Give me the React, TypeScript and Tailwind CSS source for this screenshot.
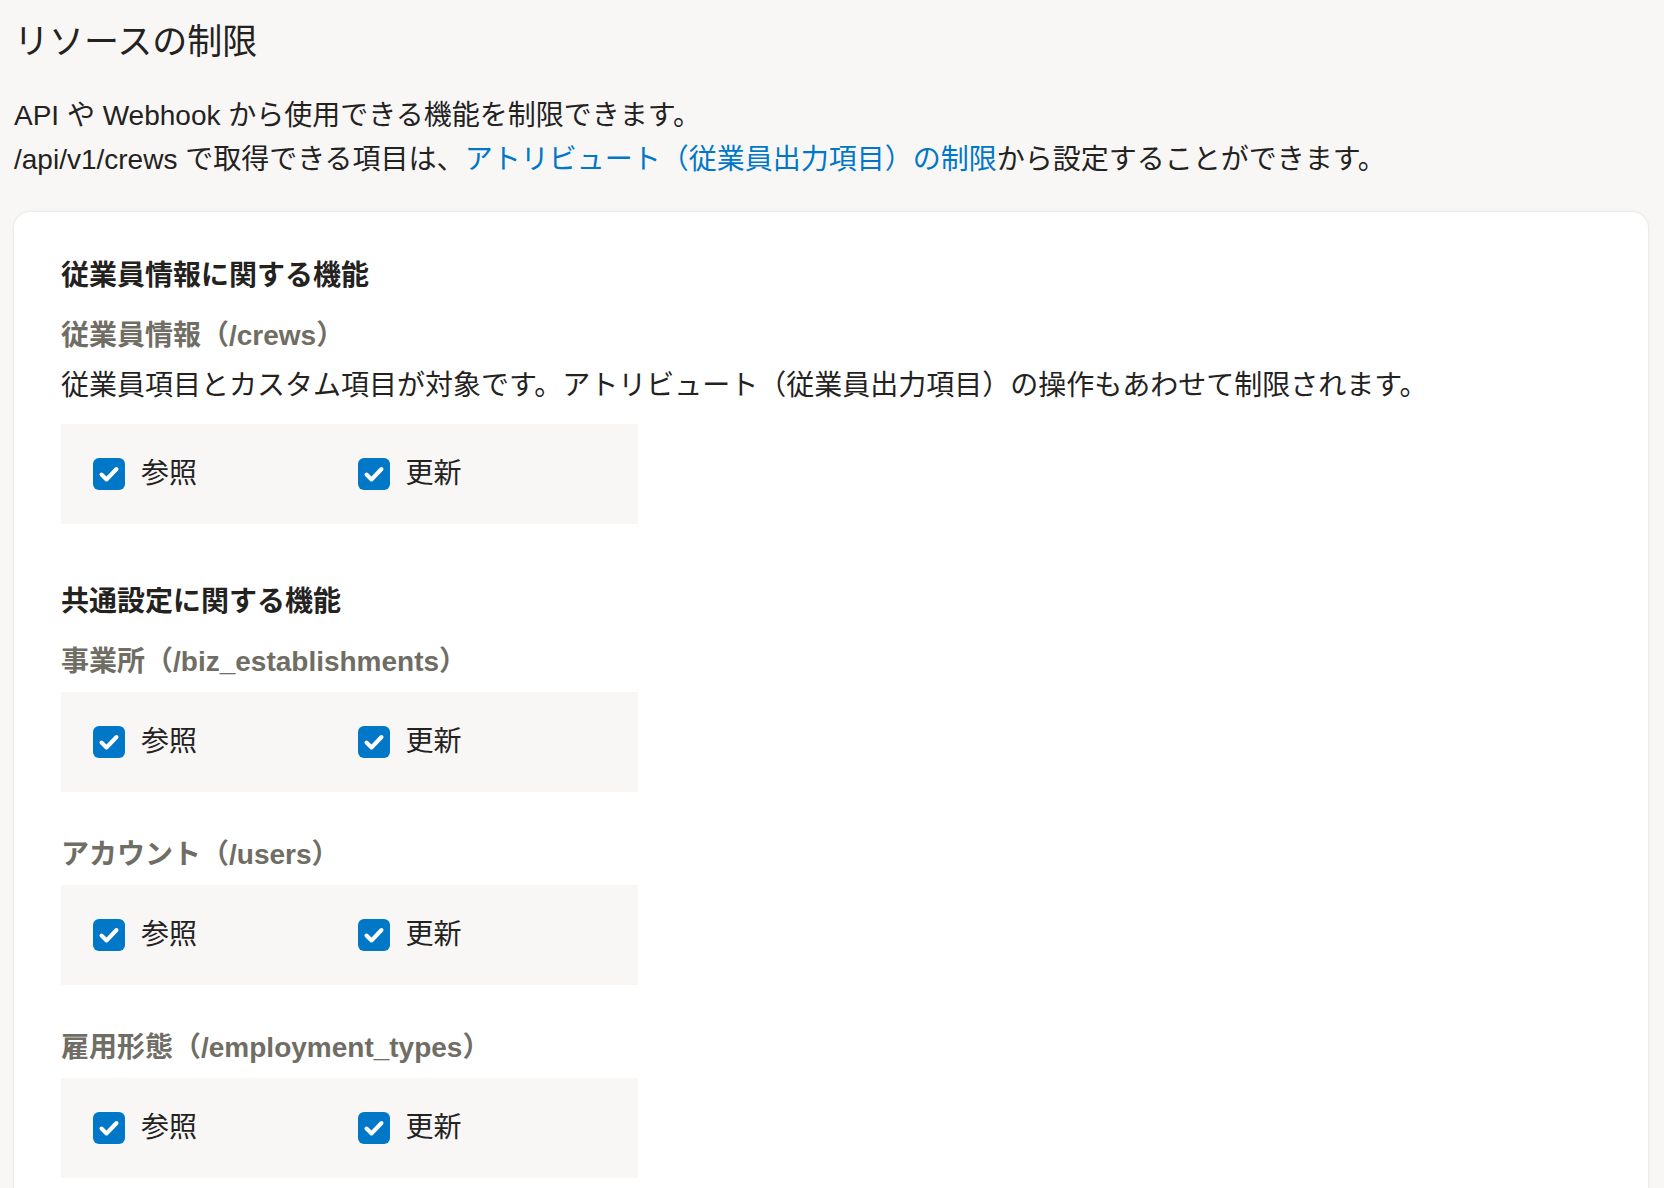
const font = "font-['Liberation_Sans','Noto_Sans_CJK_JP',sans-serif]";

type Resource = {
  label: string;
  description?: string;
};

type Section = {
  title: string;
  resources: Resource[];
};

const sections: Section[] = [
  {
    title: "従業員情報に関する機能",
    resources: [
      {
        label: "従業員情報（/crews）",
        description:
          "従業員項目とカスタム項目が対象です。アトリビュート（従業員出力項目）の操作もあわせて制限されます。",
      },
    ],
  },
  {
    title: "共通設定に関する機能",
    resources: [
      { label: "事業所（/biz_establishments）" },
      { label: "アカウント（/users）" },
      { label: "雇用形態（/employment_types）" },
    ],
  },
];

function CheckIcon() {
  return (
    <svg width="32" height="32" viewBox="0 0 32 32" className="shrink-0">
      <rect x="0" y="0" width="32" height="32" rx="6" fill="#0077c7" />
      <path
        d="M8.5 16.5l5 5 10-10.5"
        fill="none"
        stroke="#fff"
        strokeWidth="4"
        strokeLinecap="round"
        strokeLinejoin="round"
      />
    </svg>
  );
}

function CheckItem({ label }: { label: string }) {
  return (
    <label className="flex w-[256px] items-center gap-[16px]">
      <CheckIcon />
      <span className="text-[28px] leading-[42px] text-[#23221e]">{label}</span>
    </label>
  );
}

function PermissionBox({ className }: { className: string }) {
  return (
    <div className={`flex w-[577px] gap-[16px] bg-[#f8f7f6] px-[32px] py-[29px] ${className}`}>
      <CheckItem label="参照" />
      <CheckItem label="更新" />
    </div>
  );
}

export default function App() {
  return (
    <div className={`min-h-[1188px] overflow-hidden bg-[#f8f7f6] pl-[14px] pr-[16px] pt-[18px] ${font}`}>
      {/* Header */}
      <h1 className="text-[35px] font-normal leading-[48px] text-[#23221e]">リソースの制限</h1>
      <div className="mt-[28px] text-[28px] leading-[43.5px] text-[#23221e]">
        <p>API や Webhook から使用できる機能を制限できます。</p>
        <p>
          /api/v1/crews で取得できる項目は、
          <a className="text-[#0077c7]">アトリビュート（従業員出力項目）の制限</a>
          から設定することができます。
        </p>
      </div>

      {/* Card */}
      <div className="mt-[31px] rounded-t-[16px] bg-white px-[47px] pb-[48px] pt-[43px] shadow-[0_0_3px_rgba(0,0,0,0.12)]">
        {sections.map((section, si) => (
          <section key={section.title} className={si > 0 ? "mt-[57px]" : ""}>
            <h2 className="text-[28px] font-bold leading-[42px] text-[#23221e]">{section.title}</h2>
            {section.resources.map((r, ri) => (
              <div key={r.label} className={ri === 0 ? "mt-[18px]" : "mt-[42px]"}>
                <h3 className="text-[28px] font-bold leading-[42px] text-[#706d65]">{r.label}</h3>
                {r.description && (
                  <p className="mt-[8px] text-[28px] leading-[42px] text-[#23221e]">{r.description}</p>
                )}
                <PermissionBox className={r.description ? "mt-[17px]" : "mt-[9px]"} />
              </div>
            ))}
          </section>
        ))}
      </div>
    </div>
  );
}
